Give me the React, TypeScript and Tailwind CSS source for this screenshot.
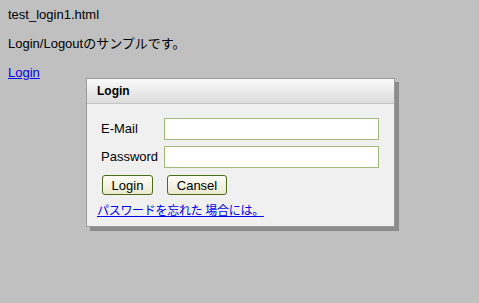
import React from "react";

export default function App() {
  const font = { fontFamily: '"Liberation Sans", Arial, "Noto Sans CJK JP", sans-serif' };
  return (
    <div className="relative w-[479px] h-[303px] bg-[#c0c0c0] text-[13px] text-black overflow-hidden" style={font}>
      <div className="px-2 pt-[7px]">
        <p className="leading-[16px]">test_login1.html</p>
        <p className="leading-[16px] mt-[13px]">Login/Logoutのサンプルです。</p>
        <p className="leading-[16px] mt-[13px]">
          <a href="#" className="text-[#0000ee] underline">Login</a>
        </p>
      </div>

      <div className="absolute left-[86px] top-[78px] w-[309px] h-[149px] border border-[#9a9a9a] bg-[#f0f0f0] shadow-[4px_4px_0_#8c8c8c] text-[13px]">
        <div className="h-[25px] border-b border-[#c4c4c4] bg-gradient-to-b from-[#fafafa] to-[#dcdcdc] flex items-center pl-[10px] font-bold text-[12px]">
          Login
        </div>
        <div className="pl-[10px] pt-[14px]">
          <div className="flex items-center h-[22px]">
            <span className="w-[67px] pl-[4px]">E-Mail</span>
            <div className="w-[215px] h-[22px] bg-white border border-[#a2b97c]" />
          </div>
          <div className="flex items-center h-[22px] mt-[6px]">
            <span className="w-[67px] pl-[4px]">Password</span>
            <div className="w-[215px] h-[22px] bg-white border border-[#a2b97c]" />
          </div>
          <div className="flex items-center mt-[7px] pl-[5px] gap-[14px]">
            <button className="w-[51px] h-[20px] rounded-[3px] border border-[#4d6b1a] bg-gradient-to-b from-[#fdfdf6] to-[#ece8d0] text-[13px] leading-none">
              Login
            </button>
            <button className="w-[60px] h-[20px] rounded-[3px] border border-[#4d6b1a] bg-gradient-to-b from-[#fdfdf6] to-[#ece8d0] text-[13px] leading-none">
              Cansel
            </button>
          </div>
          <div className="mt-[6px]">
            <a href="#" className="text-[#0000ee] underline text-[12px] leading-[16px] tracking-[-0.3px]">パスワードを忘れた 場合には。</a>
          </div>
        </div>
      </div>
    </div>
  );
}
